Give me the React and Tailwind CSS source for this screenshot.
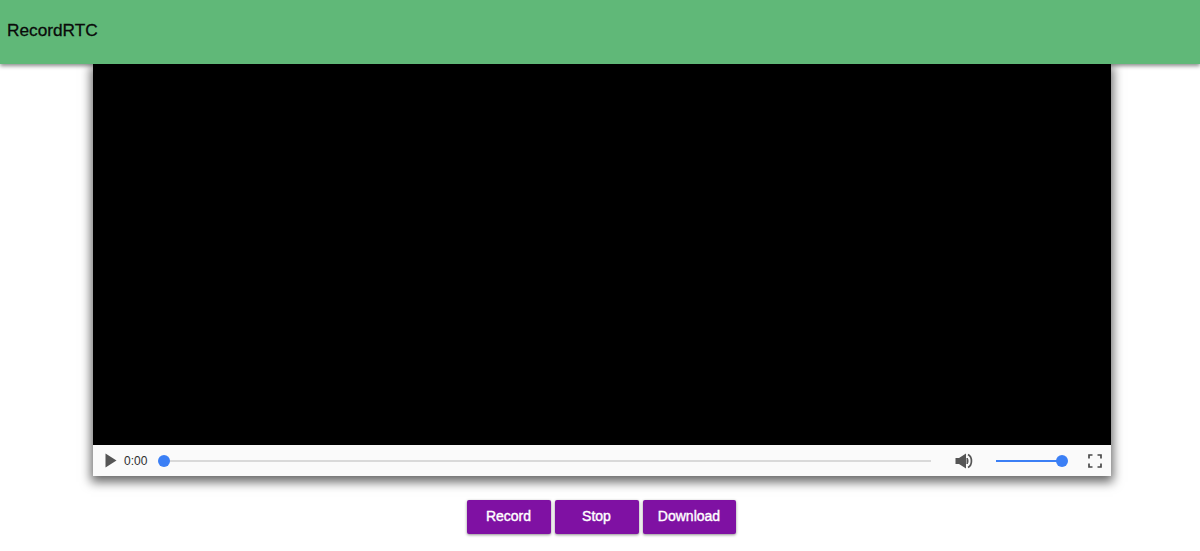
const Buttons = ["Record", "Stop", "Download"];

const App = () => {
  return (
    <div className="h-[551px] overflow-hidden bg-white font-['Liberation_Sans',Arial,sans-serif]">
      <header className="relative z-10 flex h-16 items-center bg-[#60b878] pl-[7px] pb-[2px] text-[17.25px] text-[#0a0a0a] shadow-[0_2px_4px_rgba(0,0,0,0.45)] [-webkit-text-stroke:0.3px_#0a0a0a]">
        RecordRTC
      </header>

      <main className="flex flex-col items-center pl-1">
        <div className="flex h-[412px] w-[1018px] flex-col shadow-[0_4px_10px_2px_rgba(0,0,0,0.6)]">
          <div className="flex-1 bg-black" />

          <div className="flex h-[31px] items-center bg-[#fafafa] text-[#404040]">
            <svg className="ml-3 h-[15px] w-3" viewBox="0 0 12 15">
              <path d="M0.5 0.5L11.5 7.5L0.5 14.5Z" fill="#555" />
            </svg>
            <span className="ml-[7px] w-[22px] text-[12px] whitespace-nowrap text-[#2e2e2e]">0:00</span>

            <div className="relative ml-[18px] h-[2px] w-[767px] bg-[#d9d9d9]">
              <div className="absolute -top-[5px] -left-[6px] h-3 w-3 rounded-full bg-[#3b7ff5]" />
            </div>

            <svg className="ml-6 h-[18px] w-[19px]" viewBox="0 0 19 18">
              <path d="M0.5 6H4L11 1.5V16.5L4 12H0.5Z" fill="#555" />
              <path d="M12 6C13.4 7 13.4 11 12 12Z" fill="#555" stroke="#555" strokeWidth="1" />
              <path d="M13 2.5C17.6 5 17.6 13 13 15.5" fill="none" stroke="#555" strokeWidth="1.7" />
            </svg>

            <div className="relative ml-[22px] h-[2px] w-[66px] bg-[#3b7ff5]">
              <div className="absolute -top-[5px] -right-[6px] h-3 w-3 rounded-full bg-[#3b7ff5]" />
            </div>

            <svg className="ml-[26px] h-[14px] w-[14px]" viewBox="0 0 14 14">
              <path
                d="M1 4.5V1H4.5M9.5 1H13V4.5M13 9.5V13H9.5M4.5 13H1V9.5"
                fill="none"
                stroke="#4a4a4a"
                strokeWidth="1.7"
              />
            </svg>
          </div>
        </div>

        <div className="mt-6 -ml-[2px] flex gap-1">
          {Buttons.map((label) => (
            <button
              key={label}
              className={`h-[34px] rounded-[2px] bg-[#7f11a3] pb-[1px] text-[14px] text-white shadow-[0_1px_3px_rgba(0,0,0,0.45)] [-webkit-text-stroke:0.4px_#fff] ${
                label === "Download" ? "w-[93px]" : "w-[84px]"
              }`}
            >
              {label}
            </button>
          ))}
        </div>
      </main>
    </div>
  );
};

export default App;
